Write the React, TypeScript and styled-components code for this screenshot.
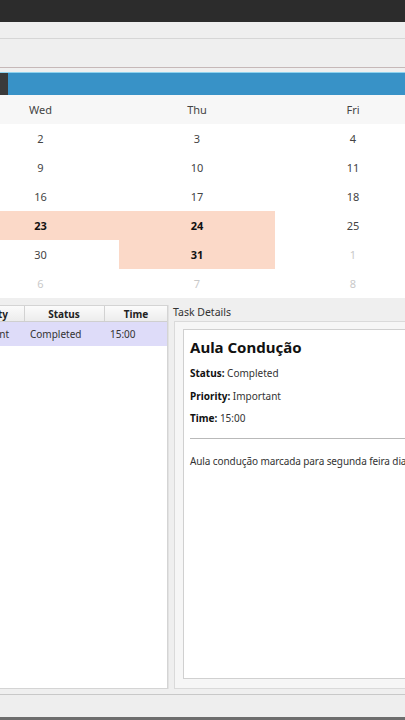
import React from 'react';
import styled, { createGlobalStyle } from 'styled-components';

const GlobalStyle = createGlobalStyle`
  html, body {
    margin: 0;
    padding: 0;
    background: #efefef;
    font-family: "Noto Sans", "Open Sans", sans-serif;
    color: #2a2a2a;
  }
`;

const Window = styled.div`
  width: 405px;
  height: 720px;
  display: flex;
  flex-direction: column;
  overflow: hidden;
  background: #efefef;
`;

const TitleBar = styled.div`
  height: 22px;
  background: #2c2c2c;
`;

const MenuBar = styled.div`
  height: 16px;
  border-bottom: 1px solid #d6d6d6;
`;

const ToolBar = styled.div`
  height: 28px;
  border-bottom: 1px solid #c6b8b8;
`;

const CalendarArea = styled.div`
  margin-top: 4px;
  overflow: hidden;
`;

const NavBar = styled.div`
  height: 22px;
  display: flex;
  background: #3892c7;
  border-top: 1px solid #8fd3ef;
`;

const NavButton = styled.div`
  width: 8px;
  background: #3a3a3a;
`;

const Grid = styled.div`
  display: grid;
  grid-template-columns: 157px 156px 156px;
  margin-left: -38px;
`;

const DayName = styled.div`
  height: 29px;
  display: flex;
  align-items: center;
  justify-content: center;
  background: #f7f7f7;
  font-size: 11px;
  color: #444;
`;

const DayCell = styled.div<{ marked?: boolean; muted?: boolean }>`
  height: 29px;
  display: flex;
  align-items: center;
  justify-content: center;
  font-size: 11px;
  background: ${p => (p.marked ? '#fbd9c8' : '#ffffff')};
  color: ${p => (p.muted ? '#c9c9c9' : p.marked ? '#111' : '#444')};
  font-weight: ${p => (p.marked ? 700 : 400)};
`;

const Panels = styled.div`
  margin-top: 7px;
  height: 384px;
  display: flex;
`;

const ListPanel = styled.div`
  width: 167px;
  flex-shrink: 0;
  background: #fff;
  border: 1px solid #d4d4d4;
  border-left: none;
  overflow: hidden;
`;

const Table = styled.table`
  width: 213px;
  border-collapse: collapse;
  table-layout: fixed;
  margin-left: -45px;
  font-size: 10px;
  th, td {
    white-space: nowrap;
    overflow: hidden;
  }
`;

const HeadCell = styled.th`
  height: 15px;
  padding: 0;
  font-weight: 700;
  color: #222;
  background: linear-gradient(#fbfbfb, #ececec);
  border-right: 1px solid #d2d2d2;
  border-bottom: 1px solid #cfcfcf;
`;

const Cell = styled.td`
  height: 24px;
  padding: 0 6px;
  background: #dedcf9;
  color: #333;
`;

const Splitter = styled.div`
  width: 5px;
  flex-shrink: 0;
  border-left: 1px solid #e2e2e2;
`;

const DetailsGroup = styled.div`
  flex: 1;
  min-width: 0;
  display: flex;
  flex-direction: column;
`;

const GroupTitle = styled.div`
  height: 16px;
  margin-left: -1px;
  font-size: 10.5px;
  line-height: 14px;
  color: #333;
`;

const GroupFrame = styled.div`
  flex: 1;
  border: 1px solid #dadada;
  border-right: none;
  background: #f6f6f6;
  padding: 7px 0 9px 8px;
  display: flex;
  min-width: 0;
`;

const Card = styled.div`
  flex: 1;
  min-width: 0;
  overflow: hidden;
  background: #fff;
  border: 1px solid #d0d0d0;
  border-right: none;
  padding: 6px 0 0 6px;
`;

const TaskTitle = styled.h2`
  margin: 0 0 8px;
  font-size: 15px;
  line-height: 22px;
  font-weight: 700;
  color: #111;
`;

const Field = styled.div`
  font-size: 10px;
  line-height: 14px;
  margin-bottom: 8.5px;
  color: #333;
  b {
    color: #111;
  }
`;

const Rule = styled.hr`
  margin: 13px 0 15px;
  border: none;
  border-top: 1px solid #b9b9b9;
`;

const Description = styled.div`
  font-size: 10px;
  letter-spacing: -0.1px;
  color: #333;
  white-space: nowrap;
`;

const StatusArea = styled.div`
  margin-top: 5px;
  flex: 1;
  border-top: 1px solid #c8c8c8;
  background: #eeeeee;
`;

const BottomEdge = styled.div`
  height: 3px;
  background: #6d6d6d;
`;

const weeks: { day: number; marked?: boolean; muted?: boolean }[][] = [
  [{ day: 2 }, { day: 3 }, { day: 4 }],
  [{ day: 9 }, { day: 10 }, { day: 11 }],
  [{ day: 16 }, { day: 17 }, { day: 18 }],
  [{ day: 23, marked: true }, { day: 24, marked: true }, { day: 25 }],
  [{ day: 30 }, { day: 31, marked: true }, { day: 1, muted: true }],
  [{ day: 6, muted: true }, { day: 7, muted: true }, { day: 8, muted: true }],
];

const App: React.FC = () => {
  return (
    <Window>
      <GlobalStyle />
      <TitleBar />
      <MenuBar />
      <ToolBar />
      <CalendarArea>
        <NavBar>
          <NavButton />
        </NavBar>
        <Grid>
          {['Wed', 'Thu', 'Fri'].map(d => (
            <DayName key={d}>{d}</DayName>
          ))}
          {weeks.flat().map((c, i) => (
            <DayCell key={i} marked={c.marked} muted={c.muted}>
              {c.day}
            </DayCell>
          ))}
        </Grid>
      </CalendarArea>
      <Panels>
        <ListPanel>
          <Table>
            <colgroup>
              <col style={{ width: 69 }} />
              <col style={{ width: 80 }} />
              <col style={{ width: 64 }} />
            </colgroup>
            <thead>
              <tr>
                <HeadCell>Priority</HeadCell>
                <HeadCell>Status</HeadCell>
                <HeadCell>Time</HeadCell>
              </tr>
            </thead>
            <tbody>
              <tr>
                <Cell>Important</Cell>
                <Cell>Completed</Cell>
                <Cell>15:00</Cell>
              </tr>
            </tbody>
          </Table>
        </ListPanel>
        <Splitter />
        <DetailsGroup>
          <GroupTitle>Task Details</GroupTitle>
          <GroupFrame>
            <Card>
              <TaskTitle>Aula Condução</TaskTitle>
              <Field>
                <b>Status:</b> Completed
              </Field>
              <Field>
                <b>Priority:</b> Important
              </Field>
              <Field>
                <b>Time:</b> 15:00
              </Field>
              <Rule />
              <Description>Aula condução marcada para segunda feira dia 23</Description>
            </Card>
          </GroupFrame>
        </DetailsGroup>
      </Panels>
      <StatusArea />
      <BottomEdge />
    </Window>
  );
};

export default App;
